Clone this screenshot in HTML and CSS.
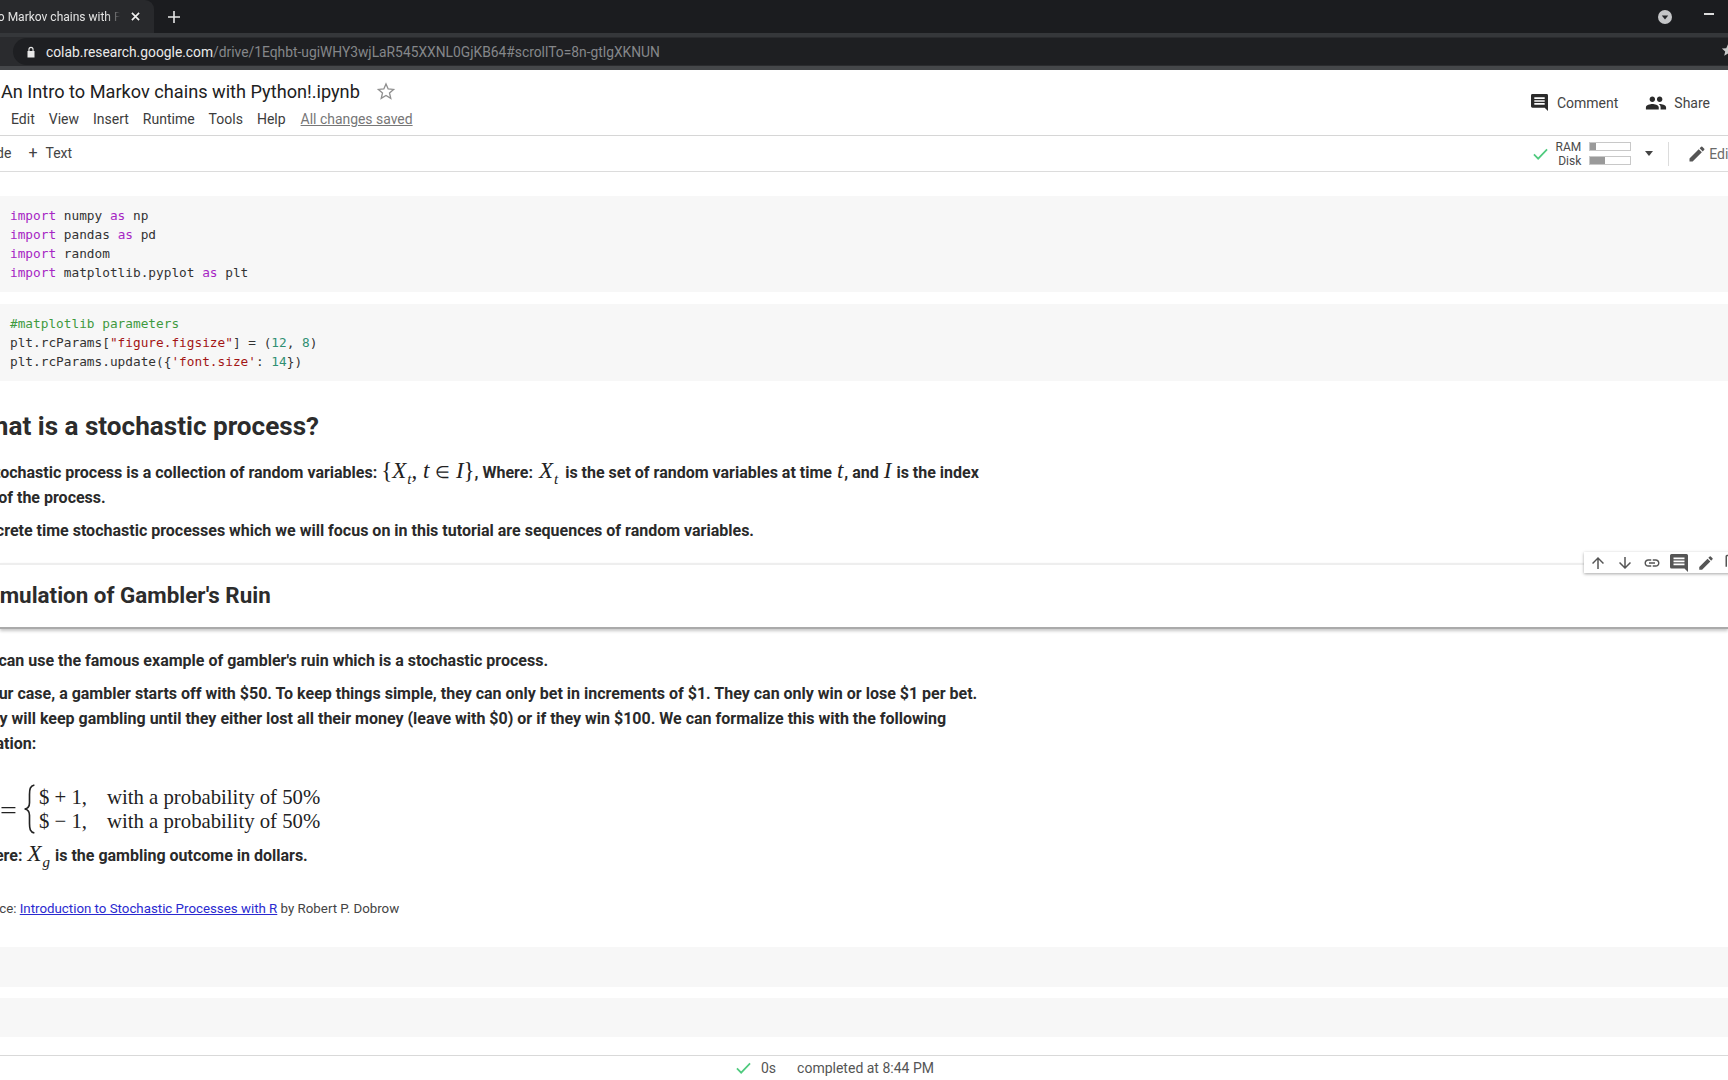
FILE: index.html
```html
<!DOCTYPE html>
<html lang="en">
<head>
<meta charset="utf-8">
<title>An Intro to Markov chains with Python!.ipynb - Colaboratory</title>
<link rel="stylesheet" href="styles.css">
</head>
<body>
<div class="app">
  <div class="tabstrip">
    <div class="tab">
      <span class="tab-title">An Intro to Markov chains with Python!.ipynb</span>
      <svg class="tab-close" viewBox="0 0 10 10"><path d="M1 1l8 8M9 1l-8 8"/></svg>
    </div>
    <svg class="tab-new" viewBox="0 0 12 12"><path d="M6 0v12M0 6h12"/></svg>
    <div class="strip-right">
      <svg class="avatar" viewBox="0 0 14 14"><circle cx="7" cy="7" r="7" fill="#c4c5c7"/><path d="M3.800 5.600h6.400L7 9.400z" fill="#222427"/></svg>
      <span class="minimize"></span>
    </div>
  </div>
  <div class="urlbar">
    <div class="pill">
      <svg class="lock" viewBox="0 0 10 12"><path d="M2.400 5V3.400a2.600 2.600 0 0 1 5.200 0V5h.9v6.400h-7V5zM3.500 5h3V3.400a1.500 1.500 0 0 0-3 0z" fill="#e8e8e8"/></svg>
      <span class="url"><b>colab.research.google.com</b>/drive/1Eqhbt-ugiWHY3wjLaR545XXNL0GjKB64#scrollTo=8n-gtlgXKNUN</span>
    </div>
    <svg class="url-star" viewBox="0 0 24 24"><path d="M12 2l3 7 7.500.6-5.700 5 1.700 7.400L12 18l-6.500 4 1.700-7.400-5.700-5L9 9z" fill="#c8c8c8"/></svg>
  </div>

  <header class="doc-header">
    <div class="doc-left">
      <div class="doc-title-row">
        <span class="doc-title">An Intro to Markov chains with Python!.ipynb</span>
        <svg class="star" viewBox="0 0 24 24"><path d="M12 3.500l2.600 6 6.500.6-4.900 4.300 1.500 6.400-5.700-3.400-5.700 3.400 1.500-6.400-4.900-4.300 6.500-.6z"/></svg>
      </div>
      <nav class="menu">
        <span>Edit</span><span>View</span><span>Insert</span><span>Runtime</span><span>Tools</span><span>Help</span><span class="saved">All changes saved</span>
      </nav>
    </div>
    <div class="doc-actions">
      <span class="action">
        <svg class="ic-comment" viewBox="0 0 18 18"><path d="M0 1.500A1.500 1.500 0 0 1 1.500 0h15A1.500 1.500 0 0 1 18 1.500V18l-3.500-3.500h-13A1.500 1.500 0 0 1 0 13zM3.500 3.500v1.800h11V3.500zM3.500 6.500v1.800h11V6.500zM3.500 9.500v1.800h11V9.500z" fill-rule="evenodd"/></svg>
        Comment
      </span>
      <span class="action">
        <svg class="ic-people" viewBox="0 0 24 24"><path d="M16 11c1.660 0 2.990-1.340 2.990-3S17.660 5 16 5s-3 1.340-3 3 1.340 3 3 3zm-8 0c1.660 0 2.990-1.340 2.990-3S9.660 5 8 5 5 6.340 5 8s1.340 3 3 3zm0 2c-2.330 0-7 1.170-7 3.500V19h14v-2.500c0-2.330-4.670-3.500-7-3.500zm8 0c-.29 0-.62.020-.97.050 1.160.84 1.970 1.970 1.970 3.450V19h6v-2.500c0-2.330-4.670-3.500-7-3.500z"/></svg>
        Share
      </span>
    </div>
  </header>

  <div class="cell-bar">
    <div class="cell-bar-left">
      <span class="code-btn">Code</span>
      <span class="text-btn"><i>+</i>Text</span>
    </div>
    <div class="cell-bar-right">
      <svg class="check" viewBox="0 0 16 12"><path d="M1 6.500l4.500 4.500L15 1"/></svg>
      <div class="res-labels"><span>RAM</span><span>Disk</span></div>
      <div class="res-bars">
        <span class="meter"><span class="fill" style="width:14%"></span></span>
        <span class="meter"><span class="fill" style="width:38%"></span></span>
      </div>
      <svg class="caret" viewBox="0 0 8 5"><path d="M0 0h8L4 5z"/></svg>
      <span class="vsep"></span>
      <svg class="ic-pencil" viewBox="0 0 24 24"><path d="M3 17.250V21h3.750L17.810 9.940l-3.750-3.750zM20.710 7.040a1 1 0 0 0 0-1.410l-2.340-2.340a1 1 0 0 0-1.410 0l-1.830 1.830 3.750 3.750z"/></svg>
      <span class="edit-label">Editing</span>
    </div>
  </div>

  <main class="notebook">
    <div class="code first">
      <div class="line"><span class="k">import</span> numpy <span class="k">as</span> np</div>
      <div class="line"><span class="k">import</span> pandas <span class="k">as</span> pd</div>
      <div class="line"><span class="k">import</span> random</div>
      <div class="line"><span class="k">import</span> matplotlib.pyplot <span class="k">as</span> plt</div>
    </div>
    <div class="code second">
      <div class="line"><span class="c">#matplotlib parameters</span></div>
      <div class="line">plt.rcParams[<span class="s">"figure.figsize"</span>] = (<span class="n">12</span>, <span class="n">8</span>)</div>
      <div class="line">plt.rcParams.update({<span class="s">'font.size'</span>: <span class="n">14</span>})</div>
    </div>

    <section class="md md-one">
      <h1 class="title-what">What is a stochastic process?</h1>
      <p class="p-a">A stochastic process is a collection of random variables: <span class="math set">{<i>X</i><sub>t</sub>, <i>t</i> <span class="in">∈</span> <i>I</i>}</span>, Where: <span class="math big xt"><i>X</i><sub>t</sub></span> is the set of random variables at time <span class="math big"><i>t</i></span>, and <span class="math big"><i>I</i></span> is the index<br>set of the process.</p>
      <p class="p-b">Discrete time stochastic processes which we will focus on in this tutorial are sequences of random variables.</p>
    </section>

    <section class="md selected">
      <h2 class="title-sim">Simulation of Gambler's Ruin</h2>
      <div class="cell-tools">
        <svg viewBox="0 0 24 24"><path d="M4 12l1.410 1.410L11 7.830V20h2V7.830l5.580 5.590L20 12l-8-8z"/></svg>
        <svg viewBox="0 0 24 24"><path d="M20 12l-1.410-1.410L13 16.170V4h-2v12.170l-5.580-5.590L4 12l8 8z"/></svg>
        <svg viewBox="0 0 24 24"><path d="M3.900 12c0-1.710 1.390-3.100 3.100-3.100h4V7H7c-2.760 0-5 2.240-5 5s2.240 5 5 5h4v-1.900H7c-1.710 0-3.100-1.390-3.100-3.100zM8 13h8v-2H8zm9-6h-4v1.900h4c1.710 0 3.100 1.390 3.100 3.100s-1.390 3.100-3.100 3.100h-4V17h4c2.760 0 5-2.240 5-5s-2.240-5-5-5z"/></svg>
        <svg viewBox="0 0 18 18"><path d="M0 1.500A1.500 1.500 0 0 1 1.500 0h15A1.500 1.500 0 0 1 18 1.500V18l-3.500-3.500h-13A1.500 1.500 0 0 1 0 13zM3.500 3.500v1.800h11V3.500zM3.500 6.500v1.800h11V6.500zM3.500 9.500v1.800h11V9.500z" fill-rule="evenodd"/></svg>
        <svg viewBox="0 0 24 24"><path d="M3 17.250V21h3.750L17.810 9.940l-3.750-3.750zM20.710 7.040a1 1 0 0 0 0-1.410l-2.340-2.340a1 1 0 0 0-1.410 0l-1.830 1.830 3.750 3.750z"/></svg>
        <svg viewBox="0 0 24 24"><path d="M16 1H4a2 2 0 0 0-2 2v14h2V3h12zm3 4H8a2 2 0 0 0-2 2v14a2 2 0 0 0 2 2h11a2 2 0 0 0 2-2V7a2 2 0 0 0-2-2zm0 16H8V7h11z"/></svg>
      </div>
    </section>

    <section class="md md-two">
      <p class="p-c">We can use the famous example of gambler's ruin which is a stochastic process.</p>
      <p class="p-d">In our case, a gambler starts off with $50. To keep things simple, they can only bet in increments of $1. They can only win or lose $1 per bet.<br>They will keep gambling until they either lost all their money (leave with $0) or if they win $100. We can formalize this with the following<br>notation:</p>
      <div class="formula">
        <span class="f-eq">=</span>
        <svg class="brace" viewBox="0 0 12 48" preserveAspectRatio="none"><path d="M10.500 1C6.500 2 6 5 6 10v8c0 3-1 5.500-4.500 6C5 24.500 6 27 6 30v8c0 5 .500 8 4.500 9"/></svg>
        <div class="f-grid">
          <span>$ + 1,</span><span>with a probability of 50%</span>
          <span>$ − 1,</span><span>with a probability of 50%</span>
        </div>
      </div>
      <p class="p-e">Where: <span class="math big"><i>X</i><sub>g</sub></span> is the gambling outcome in dollars.</p>
      <p class="source">Source: <a href="#">Introduction to Stochastic Processes with R</a> by Robert P. Dobrow</p>
    </section>

    <div class="empty first-empty"></div>
    <div class="empty second-empty"></div>
  </main>

  <footer class="status">
    <svg class="check" viewBox="0 0 16 12"><path d="M1 6.500l4.500 4.500L15 1"/></svg>
    <span class="secs">0s</span>
    <span>completed at 8:44 PM</span>
  </footer>
</div>
</body>
</html>
```
FILE: styles.css
```css
* { box-sizing: border-box; }
html, body { margin: 0; height: 100%; overflow: hidden; }
body { font-family: Roboto, "Liberation Sans", sans-serif; background: #fff; color: #212121; }
.app { width: 1728px; height: 1080px; display: flex; flex-direction: column; overflow: hidden; }

/* browser chrome */
.tabstrip { height: 33px; background: #1b1c1f; display: flex; align-items: flex-start; flex: none; }
.tab { width: 154px; height: 33px; background: #28292c; border-radius: 0 9px 0 0; display: flex; align-items: center; overflow: hidden; position: relative; }
.tab-title { margin-left: -51px; width: 172px; flex: none; white-space: nowrap; overflow: hidden; color: #e4e4e4; font-size: 12px; -webkit-mask-image: linear-gradient(90deg, #000 158px, transparent 171px); mask-image: linear-gradient(90deg, #000 158px, transparent 171px); }
.tab-close { width: 9px; height: 9px; margin-left: 10px; flex: none; fill: none; stroke: #f0f0f0; stroke-width: 1.800; }
.tab-new { width: 12px; height: 12px; margin: 11px 0 0 14px; fill: none; stroke: #e6e6e6; stroke-width: 1.600; }
.strip-right { margin-left: auto; display: flex; align-items: center; padding: 10px 14px 0 0; gap: 32px; }
.avatar { width: 14px; height: 14px; }
.minimize { width: 10px; height: 2px; background: #dcdcdc; margin-top: -6px; }
.urlbar { height: 37px; flex: none; background: #2a2b2e; border-top: 4px solid #35373a; border-bottom: 4px solid #45474a; display: flex; align-items: center; padding-left: 13px; position: relative; }
.pill { flex: 1; height: 27px; margin-right: -40px; background: #1e1f22; border-radius: 14px; display: flex; align-items: center; padding-left: 13px; }
.lock { width: 10px; height: 12px; flex: none; }
.url { margin-left: 10px; font-size: 13.820px; color: #85878a; white-space: nowrap; }
.url b { font-weight: 400; color: #eaeaea; }
.url-star { position: absolute; right: -7px; top: 6px; width: 14px; height: 14px; }

/* header */
.doc-header { height: 66px; flex: none; display: flex; justify-content: space-between; border-bottom: 1px solid #d6d6d6; }
.doc-left { display: flex; flex-direction: column; padding-left: 1px; }
.doc-title-row { display: flex; align-items: center; height: 23px; margin-top: 10px; }
.doc-title { font-size: 18.170px; color: #212121; }
.star { width: 20px; height: 20px; margin-left: 16px; margin-top: -2px; fill: none; stroke: #8f8f8f; stroke-width: 1.600; }
.menu { display: flex; margin-top: 7px; padding-left: 10px; font-size: 14px; color: #3c3c3c; line-height: 18px; gap: 14px; }
.saved { color: #777; text-decoration: underline; margin-left: 1px; font-size: 13.950px; }
.doc-actions { display: flex; align-items: center; padding: 0 18px 0 0; gap: 27px; font-size: 14px; color: #444; }
.action { display: flex; align-items: center; }
.ic-comment { width: 17px; height: 17px; margin-right: 9px; fill: #2b2b2b; }
.ic-people { width: 22px; height: 22px; margin-right: 7px; fill: #2b2b2b; }

/* toolbar */
.cell-bar { height: 36px; flex: none; display: flex; justify-content: space-between; align-items: center; border-bottom: 1px solid #dcdcdc; font-size: 14px; color: #444; }
.cell-bar-left { display: flex; align-items: center; margin-top: -2px; }
.code-btn { margin-left: -21px; }
.text-btn { margin-left: 17px; }
.text-btn i { font-style: normal; margin-right: 8px; font-size: 16px; }
.cell-bar-right { display: flex; align-items: center; margin-right: -24px; }
.check { width: 15px; height: 12px; fill: none; stroke: #4fca7e; stroke-width: 1.800; flex: none; }
.res-labels { display: flex; flex-direction: column; align-items: flex-end; font-size: 12px; line-height: 14px; margin-left: 7px; width: 26px; color: #4a4a4a; }
.res-bars { display: flex; flex-direction: column; gap: 5px; margin-left: 8px; }
.meter { display: block; width: 42px; height: 9px; border: 1px solid #c8c8c8; background: #fff; }
.fill { display: block; height: 100%; background: #9a9a9a; }
.caret { width: 8px; height: 5px; margin-left: 14px; fill: #444; }
.vsep { width: 1px; height: 24px; background: #dcdcdc; margin-left: 15px; }
.ic-pencil { width: 20px; height: 20px; margin-left: 18px; margin-right: -1px; fill: #555; }
.edit-label { margin-left: 3px; color: #6a6a6a; }

/* notebook */
.notebook { flex: 1; min-height: 0; overflow: hidden; display: flex; flex-direction: column; }
.code { background: #f7f7f7; padding: 10px 0 0 10px; font: 12.780px/19px "DejaVu Sans Mono", "Liberation Mono", monospace; color: #333; }
.line { white-space: pre; height: 19px; }
.code.first { margin-top: 24px; height: 96px; }
.code.second { margin-top: 12px; height: 77px; }
.k { color: #a626c4; }
.c { color: #3f9a3f; }
.s { color: #a31515; }
.n { color: #2f8f72; }

.md { color: #2a2a2a; font-weight: 700; font-size: 16px; }
.md h1, .md h2 { margin: 0; font-weight: 700; line-height: 30px; color: #2c2c2c; }
.md h1 { font-size: 26.100px; }
.md h2 { font-size: 22.400px; }
.md p { margin: 0; line-height: 25px; }
.md-one { height: 182px; }
.md h1.title-what { margin: 30px 0 0 -29px; }
.md p.p-a { margin: 19px 0 0 -28px; }
.md p.p-b { margin: 8px 0 0 -27px; }
.math { font-family: "Liberation Serif", serif; font-weight: 400; color: #222; }
.math.big { font-size: 23px; line-height: 0; margin: 0 1px; }
.math.xt { margin: 0 3px 0 2px; }
.math.set { font-size: 23px; line-height: 0; }
.math sub { font-size: 15px; font-style: italic; line-height: 0; margin-left: 1px; }
.math .in { font-size: 17px; }

.selected { height: 66px; border-top: 2px solid #eee; border-bottom: 2px solid #aaa; box-shadow: 0 2px 3px rgba(0,0,0,.22); position: relative; padding-top: 15px; }
.md h2.title-sim { margin-left: -20px; }
.cell-tools { position: absolute; left: 1584px; top: -13px; width: 170px; height: 21px; background: #fff; box-shadow: 0 1px 3px rgba(0,0,0,.35); display: flex; align-items: center; padding-left: 5px; gap: 9px; }
.cell-tools svg { width: 18px; height: 18px; fill: #555; flex: none; }

.md-two { padding-top: 19px; height: 309px; }
.md p.p-c { margin-left: -28px; }
.md p.p-d { margin: 8px 0 0 -28px; }
.formula { display: flex; align-items: center; margin-top: 28px; height: 50px; font-family: "Liberation Serif", serif; font-weight: 400; font-size: 20.750px; color: #222; }
.f-eq { width: 16px; margin-top: 3px; font-size: 26px; transform: scaleX(1.150); transform-origin: left center; }
.brace { width: 13px; height: 50px; margin-left: 7px; fill: none; stroke: #222; stroke-width: 1.500; }
.f-grid { display: grid; grid-template-columns: 68px auto; line-height: 24px; margin-left: 3px; }
.md p.p-e { margin: 9px 0 0 -28px; }
.md p.source { margin: 31px 0 0 -28px; font-size: 13.300px; font-weight: 400; color: #444; line-height: 20px; }
.source a { color: #2a2ad0; }

.empty { background: #f7f7f7; flex: none; }
.first-empty { height: 40px; margin-top: 9px; }
.second-empty { height: 39px; margin-top: 11px; }

.status { height: 25px; flex: none; border-top: 1px solid #d9d9d9; display: flex; align-items: center; font-size: 14px; color: #555; padding-left: 736px; }
.secs { margin-left: 10px; margin-right: 21px; }
```
